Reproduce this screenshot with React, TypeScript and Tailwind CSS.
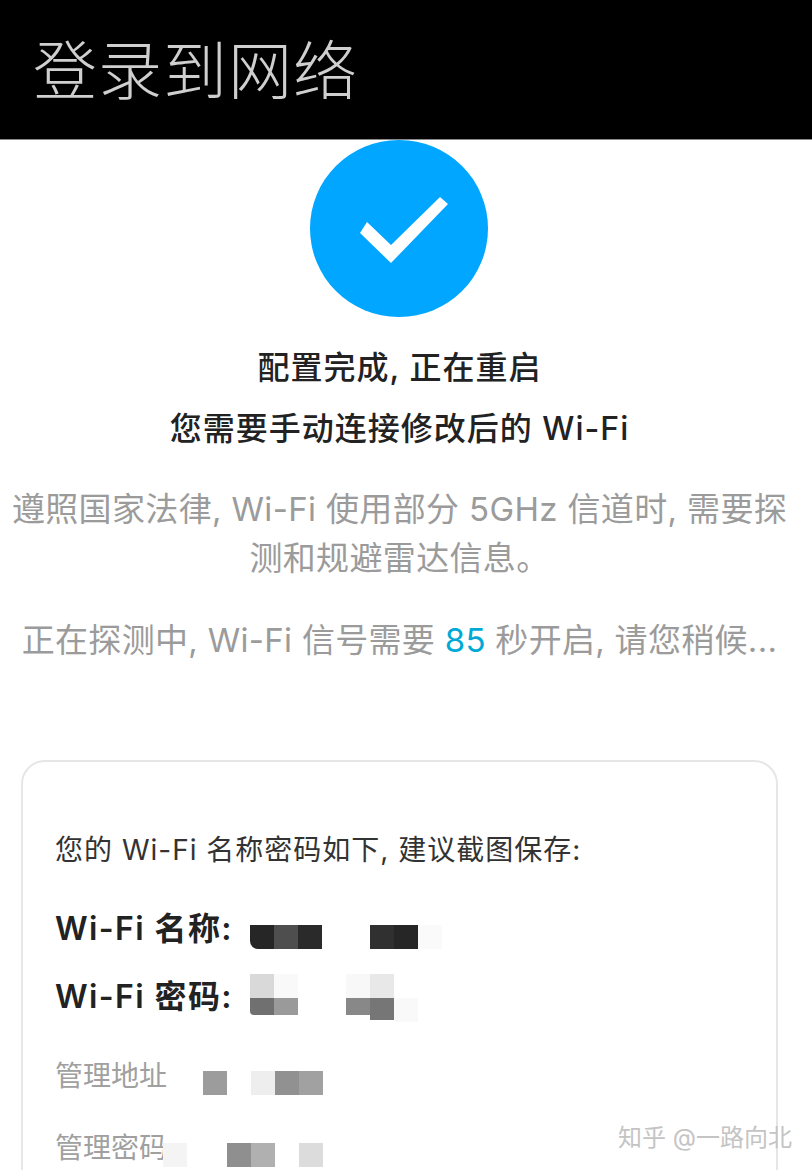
const font = { fontFamily: 'Inter, "Noto Sans CJK SC", "Noto Sans", sans-serif' };

const Cell = ({ className = '' }: { className?: string }) => <div className={`w-6 h-6 shrink-0 ${className}`}></div>;

const App = () => {
  return (
    <div style={font} className="relative w-[812px] h-[1170px] overflow-hidden bg-white">
      <header className="h-[140px] bg-black border-b border-[#8a8a8a] pl-[33px] pt-[29px]">
        <h1 className="text-[64px] leading-[84px] font-light tracking-[1px] text-[#cfcfcf]">登录到网络</h1>
      </header>

      <div className="w-[799px] flex flex-col items-center">
        <div className="ml-[-2px] w-[178px] h-[177px] rounded-full bg-[#00a6ff]">
          <svg className="w-full h-full" viewBox="0 0 178 177" fill="#fff">
            <polygon points="57,82 50,93 81,123 138,64 130,57 81,105" />
          </svg>
        </div>
        <p className="mt-[26px] text-[32px] leading-[50px] font-medium tracking-[1px] text-[#222]">配置完成, 正在重启</p>
        <p className="mt-[11px] text-[32px] leading-[50px] font-medium tracking-[1px] text-[#222]">您需要手动连接修改后的 Wi-Fi</p>
        <p className="mt-[31px] w-[780px] text-center text-[33px] leading-[49px] tracking-[0.35px] text-[#9b9b9b]">
          遵照国家法律, Wi-Fi 使用部分 5GHz 信道时, 需要探测和规避雷达信息。
        </p>
        <p className="mt-[33px] whitespace-nowrap text-[33px] leading-[49px] tracking-[0.3px] text-[#9b9b9b]">
          正在探测中, Wi-Fi 信号需要 <span className="text-[#00a9d6]">85</span> 秒开启, 请您稍候...
        </p>
      </div>

      <section className="ml-[21px] w-[757px] mt-[95px] h-[500px] rounded-[24px] border-2 border-[#e6e6e6] pl-[32px] pt-[66px]">
        <p className="text-[28px] leading-[44px] tracking-[1px] text-[#333]">您的 Wi-Fi 名称密码如下, 建议截图保存:</p>

        <div className="mt-[23px] flex items-center h-[64px]">
          <span className="mt-[4px] w-[195px] shrink-0 text-[32px] leading-[48px] font-semibold tracking-[1.4px] text-[#222]">Wi-Fi 名称:</span>
          <div className="flex mt-[20px]">
            <Cell className="bg-[#262626] rounded-bl-lg" />
            <Cell className="bg-[#4e4e4e]" />
            <Cell className="bg-[#2a2a2a]" />
            <Cell className="ml-12 bg-[#303030]" />
            <Cell className="bg-[#262626]" />
            <Cell className="bg-[#fafafa]" />
          </div>
        </div>

        <div className="flex items-center h-[72px]">
          <span className="mt-[4px] w-[195px] shrink-0 text-[32px] leading-[48px] font-semibold tracking-[1.4px] text-[#222]">Wi-Fi 密码:</span>
          <div className="flex flex-col mt-[6px]">
            <div className="flex">
              <Cell className="bg-[#d9d9d9]" />
              <Cell className="bg-[#f9f9f9]" />
              <Cell className="ml-12 bg-[#f8f8f8]" />
              <Cell className="bg-[#e8e8e8]" />
            </div>
            <div className="flex">
              <Cell className="h-[17px] bg-[#707070] rounded-bl" />
              <Cell className="h-[17px] bg-[#9a9a9a]" />
              <Cell className="ml-12 h-[17px] bg-[#888888]" />
              <Cell className="h-[22px] bg-[#767676]" />
              <Cell className="bg-[#f9f9f9]" />
            </div>
          </div>
        </div>

        <div className="mt-[25px] flex items-start h-[48px]">
          <span className="w-[148px] shrink-0 text-[28px] leading-[40px] text-[#a0a0a0]">管理地址</span>
          <div className="flex mt-[15px]">
            <Cell className="bg-[#9c9c9c]" />
            <Cell className="ml-6 bg-[#eeeeee]" />
            <Cell className="bg-[#919191]" />
            <Cell className="bg-[#a1a1a1]" />
          </div>
        </div>

        <div className="mt-[24px] flex items-start h-[48px]">
          <span className="w-[172px] shrink-0 text-[28px] leading-[40px] text-[#a0a0a0]">管理密码</span>
          <div className="flex mt-[15px]">
            <Cell className="ml-[-64px] mr-[40px] bg-[#f4f4f4]" />
            <Cell className="bg-[#8f8f8f]" />
            <Cell className="bg-[#b0b0b0]" />
            <Cell className="ml-6 bg-[#dcdcdc]" />
          </div>
        </div>
      </section>

      <span className="absolute right-[20px] bottom-[16px] text-[24px] leading-[32px] text-[#c4c4c4]">知乎 @一路向北</span>
    </div>
  );
};

export default App;
